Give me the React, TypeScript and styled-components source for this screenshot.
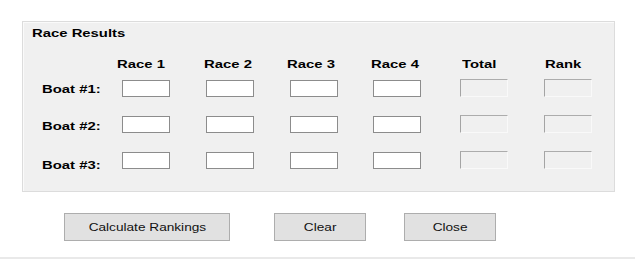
import React from 'react'
import styled, { createGlobalStyle } from 'styled-components'

const GlobalStyle = createGlobalStyle`
  html, body {
    margin: 0;
    padding: 0;
    background: #ffffff;
  }
  body {
    font-family: "Liberation Sans", Arial, sans-serif;
    color: #000;
  }
`

const cols = '80px 84px 84px 83px 87px 84px 48px'

const Page = styled.div`
  width: 635px;
  height: 261px;
  display: flex;
  flex-direction: column;
  overflow: hidden;
`

const GroupBox = styled.section`
  box-sizing: border-box;
  width: 593px;
  height: 171px;
  margin: 21px 0 0 22px;
  padding: 1px 0 0 19px;
  background: #f0f0f0;
  border: 1px solid #dcdcdc;
  box-shadow: inset 1px 1px 0 #fafafa;
  display: flex;
  flex-direction: column;
`

const Title = styled.div`
  height: 13px;
  margin-left: -10px;
`

/* the screenshot is stretched sideways, so the glyphs are too */
const Bold = styled.span<{ $dx?: number; $dy?: number }>`
  display: inline-block;
  font-size: 11px;
  line-height: 13px;
  font-weight: 700;
  white-space: nowrap;
  transform: scaleX(1.35);
  transform-origin: left center;
  margin-left: ${p => p.$dx ?? 0}px;
  position: relative;
  top: ${p => p.$dy ?? 0}px;
`

const HeaderRow = styled.div`
  display: grid;
  grid-template-columns: ${cols};
  height: 13px;
  margin: 18px 0 12px;
`

const Rows = styled.div`
  display: flex;
  flex-direction: column;
  gap: 19px;
`

const BoatRow = styled.div`
  display: grid;
  grid-template-columns: ${cols};
  height: 17px;
  align-items: center;
`

const Field = styled.input`
  box-sizing: border-box;
  width: 48px;
  height: 17px;
  margin: 0;
  padding: 0 2px;
  background: #fff;
  border: 1px solid #8c8c8c;
  outline: none;
  font: inherit;
  font-size: 11px;

  &[readonly] {
    height: 18px;
    background: #f0f0f0;
    border-color: #acacac #f9f9f9 #f9f9f9 #a4a4a4;
  }
`

const ButtonBar = styled.div`
  display: flex;
  margin: 21px 0 0 64px;
`

const Button = styled.button<{ $w: number; $ml?: number }>`
  box-sizing: border-box;
  width: ${p => p.$w}px;
  height: 28px;
  margin: 0 0 0 ${p => p.$ml ?? 0}px;
  padding: 0;
  background: #e1e1e1;
  border: 1px solid #adadad;
  font-family: "Liberation Sans", Arial, sans-serif;
  font-size: 11px;
  color: #111;
  display: flex;
  align-items: center;
  justify-content: center;
`

const ButtonText = styled.span`
  display: inline-block;
  white-space: nowrap;
  transform: scaleX(1.24);
  transform-origin: center;
`

const Footer = styled.div`
  height: 2px;
  margin-top: 16px;
  background: #e9e9e9;
`

const headings: { text: string; dx: number }[] = [
  { text: 'Race 1', dx: -5 },
  { text: 'Race 2', dx: -2 },
  { text: 'Race 3', dx: -3 },
  { text: 'Race 4', dx: -2 },
  { text: 'Total', dx: 2 },
  { text: 'Rank', dx: 1 },
]

const boats: { label: string; dy: number }[] = [
  { label: 'Boat #1:', dy: 0 },
  { label: 'Boat #2:', dy: 1 },
  { label: 'Boat #3:', dy: 4 },
]

const App = () => {
  return (
    <>
      <GlobalStyle />
      <Page>
        <GroupBox>
          <Title>
            <Bold>Race Results</Bold>
          </Title>
          <HeaderRow>
            <span />
            {headings.map(h => (
              <div key={h.text}>
                <Bold $dx={h.dx}>{h.text}</Bold>
              </div>
            ))}
          </HeaderRow>
          <Rows>
            {boats.map(b => (
              <BoatRow key={b.label}>
                <div>
                  <Bold $dy={b.dy}>{b.label}</Bold>
                </div>
                <Field />
                <Field />
                <Field />
                <Field />
                <Field readOnly tabIndex={-1} />
                <Field readOnly tabIndex={-1} />
              </BoatRow>
            ))}
          </Rows>
        </GroupBox>
        <ButtonBar>
          <Button $w={166}>
            <ButtonText>Calculate Rankings</ButtonText>
          </Button>
          <Button $w={92} $ml={44}>
            <ButtonText>Clear</ButtonText>
          </Button>
          <Button $w={92} $ml={38}>
            <ButtonText>Close</ButtonText>
          </Button>
        </ButtonBar>
        <Footer />
      </Page>
    </>
  )
}

export default App
